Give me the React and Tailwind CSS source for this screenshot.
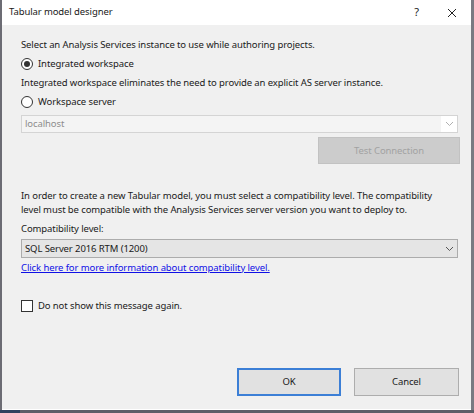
import React from "react";

const font = { fontFamily: '"Noto Sans", "Open Sans", sans-serif' };

function Chevron({ color = "#606060" }) {
  return (
    <svg width="9" height="6" viewBox="0 0 9 6" fill="none">
      <path d="M1 1 L4.5 4.5 L8 1" stroke={color} strokeWidth="1" />
    </svg>
  );
}

function Radio({ checked }) {
  return (
    <span className="w-[12px] h-[12px] rounded-full border border-[#333] bg-white flex items-center justify-center shrink-0">
      {checked && <span className="w-[6px] h-[6px] rounded-full bg-[#333]" />}
    </span>
  );
}

export default function App() {
  return (
    <div
      className="w-[474px] h-[413px] flex flex-col bg-[#f0f0f0] text-[9.5px] tracking-[-0.1px] text-[#1a1a1a] overflow-hidden"
      style={font}
    >
      <div className="flex flex-1 min-h-0">
        <div className="w-[2px] bg-[#6c6c74]" />
        <div className="flex-1 flex flex-col min-w-0">
          <div className="h-[25px] bg-white flex items-center pl-[7px] pr-[14px]">
            <span className="flex-1">Tabular model designer</span>
            <span className="mr-[28px] text-[11px]">?</span>
            <svg width="10" height="10" viewBox="0 0 10 10">
              <path d="M1 1 L9 9 M9 1 L1 9" stroke="#222" strokeWidth="1" />
            </svg>
          </div>
          <div className="flex-1 flex flex-col pl-[19px] pr-[11px] pt-[10px] leading-[19px]">
            <div>Select an Analysis Services instance to use while authoring projects.</div>
            <div className="flex items-center gap-[5px]">
              <Radio checked />
              <span>Integrated workspace</span>
            </div>
            <div>Integrated workspace eliminates the need to provide an explicit AS server instance.</div>
            <div className="flex items-center gap-[5px]">
              <Radio />
              <span>Workspace server</span>
            </div>
            <div className="mt-[4px] h-[18px] w-[437px] border border-[#d4d4d4] bg-[#f4f4f4] flex items-center">
              <span className="flex-1 pl-[3px] text-[#8c8c8c] leading-none">localhost</span>
              <span className="w-[16px] h-full bg-white flex items-center justify-center">
                <Chevron color="#b0b0b0" />
              </span>
            </div>
            <div className="flex justify-end">
              <div className="mt-[4px] h-[27px] w-[142px] bg-[#cccccc] border border-[#c2c2c2] flex items-center justify-center text-[#a2a2a2] leading-none">
                Test Connection
              </div>
            </div>
            <div className="mt-[25px] leading-[14px] pr-[10px]">
              In order to create a new Tabular model, you must select a compatibility level. The compatibility level must be compatible with the Analysis Services server version you want to deploy to.
            </div>
            <div className="mt-[5px] leading-[14px]">Compatibility level:</div>
            <div className="mt-[3px] h-[19px] w-[437px] border border-[#acacac] bg-[#e5e5e5] flex items-center">
              <span className="flex-1 pl-[3px] leading-none">SQL Server 2016 RTM (1200)</span>
              <span className="w-[16px] flex items-center justify-center">
                <Chevron color="#555" />
              </span>
            </div>
            <div className="mt-[3px] leading-[14px]">
              <span className="text-[#1010e6] underline">Click here for more information about compatibility level.</span>
            </div>
            <div className="mt-[24px] flex items-center gap-[5px] leading-[14px]">
              <span className="w-[12px] h-[12px] border border-[#333] bg-white shrink-0" />
              <span>Do not show this message again.</span>
            </div>
            <div className="mt-[55px] flex justify-end gap-[13px] pr-[1px]">
              <div className="w-[104px] h-[28px] bg-[#e1e1e1] border-2 border-[#3c7fd6] flex items-center justify-center leading-none">
                OK
              </div>
              <div className="w-[105px] h-[28px] bg-[#e1e1e1] border border-[#adadad] flex items-center justify-center leading-none">
                Cancel
              </div>
            </div>
          </div>
          <div className="h-[1px] bg-white" />
        </div>
        <div className="w-[3px] bg-[#7a7a82]" />
      </div>
      <div className="h-[3px] flex">
        <div className="w-[20px] bg-[#33415e]" />
        <div className="flex-1 bg-[#5e5e66]" />
      </div>
    </div>
  );
}
